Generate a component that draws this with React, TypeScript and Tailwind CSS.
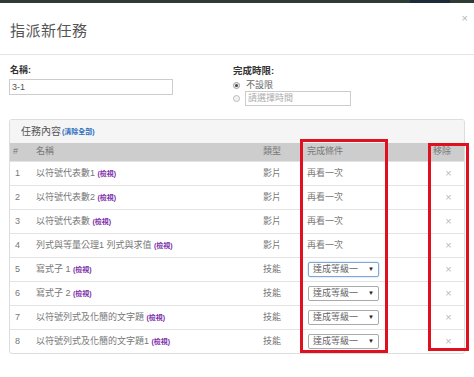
import React from "react";

const rows = [
  { name: "以符號代表數1", type: "影片", skill: false },
  { name: "以符號代表數2", type: "影片", skill: false },
  { name: "以符號代表數", type: "影片", skill: false },
  { name: "列式與等量公理1 列式與求值", type: "影片", skill: false },
  { name: "寫式子 1", type: "技能", skill: true },
  { name: "寫式子 2", type: "技能", skill: true },
  { name: "以符號列式及化簡的文字題", type: "技能", skill: true },
  { name: "以符號列式及化簡的文字題1", type: "技能", skill: true },
];

const cols = "grid grid-cols-[26px_227px_43px_123px_41px]";

const App = () => {
  return (
    <div
      className="relative w-[474px] h-[377px] overflow-hidden bg-white text-[#555]"
      style={{ fontFamily: '"Liberation Sans", "Noto Sans CJK TC", sans-serif' }}
    >
      <div className="h-[3px] bg-[#2e3a34] flex justify-end">
        <div className="w-[40px] h-full bg-[#1d2a3a] mr-[24px]" />
      </div>

      {/* modal header */}
      <div className="h-[52px] border-b border-[#e5e5e5] flex justify-between items-start pl-[10px] pr-[6px]">
        <h1 className="mt-[20px] text-[15px] leading-[16px] text-[#555] tracking-[0.5px]">指派新任務</h1>
        <button className="mt-[9px] text-[11px] leading-[12px] text-[#b5b5b5]">×</button>
      </div>

      {/* form */}
      <div className="h-[64px] grid grid-cols-[223px_1fr] px-[10px] pt-[10px]">
        <div>
          <div className="text-[9px] leading-[11px] font-bold text-[#333]">名稱:</div>
          <div className="mt-[3px] w-[164px] h-[16px] border border-[#ccc] -ml-px px-[2px] text-[9px] leading-[14px] text-[#555]">
            3-1
          </div>
        </div>
        <div>
          <div className="text-[9.5px] leading-[11px] font-bold text-[#333]">完成時限:</div>
          <div className="mt-[4px] flex items-center gap-[6px] h-[10px]">
            <span className="w-[7px] h-[7px] rounded-full border border-[#999] bg-[#eee] flex items-center justify-center">
              <span className="w-[3px] h-[3px] rounded-full bg-[#444]" />
            </span>
            <span className="text-[9px] leading-[10px] text-[#666]">不設限</span>
          </div>
          <div className="mt-px flex items-center gap-[5px]">
            <span className="w-[7px] h-[7px] rounded-full border border-[#bbb] bg-[#f2f2f2]" />
            <div className="w-[106px] h-[15px] border border-[#ccc] px-[2px] text-[9px] leading-[13px] text-[#aaa]">
              請選擇時間
            </div>
          </div>
        </div>
      </div>

      {/* panel */}
      <div className="mx-[9px] border border-[#ddd] rounded-[3px] overflow-hidden">
        <div className="h-[23px] bg-[#f5f5f5] flex items-center pl-[11px] gap-[1px]">
          <span className="text-[10px] leading-[11px] text-[#555]">任務內容</span>
          <span className="text-[7px] leading-[8px] font-bold text-[#2a6dbf] mt-[1px]">(清除全部)</span>
        </div>
        <div className={`${cols} h-[18px] items-center bg-[#cdcdcd] text-[9px] text-[#777]`}>
          <span className="pl-[3px]">#</span>
          <span>名稱</span>
          <span>類型</span>
          <span className="pl-[1px]">完成條件</span>
          <span className="pl-[4px]">移除</span>
        </div>
        {rows.map((r, i) => (
          <div
            key={i}
            className={`${cols} h-[24px] items-center border-t border-[#e3e3e3] text-[9px] text-[#777]`}
          >
            <span className="pl-[5px]">{i + 1}</span>
            <span className="whitespace-nowrap">
              {r.name} <span className="text-[7px] font-bold text-[#7a2aa8]">(檢視)</span>
            </span>
            <span>{r.type}</span>
            <span className="pl-[1px]">
              {r.skill ? (
                <div
                  className={`w-[71px] h-[15px] ml-px rounded-[2px] border bg-white flex items-center justify-between pl-[4px] pr-[4px] text-[9px] text-[#666] ${
                    i === 4 ? "border-[#7fa8d8] shadow-[0_0_2px_#9cc0ea]" : "border-[#aaa]"
                  }`}
                >
                  <span>達成等級一</span>
                  <span className="text-[6px] text-[#222]">▼</span>
                </div>
              ) : (
                "再看一次"
              )}
            </span>
            <span className="text-[11px] text-[#bbb] text-center pr-[2px]">×</span>
          </div>
        ))}
      </div>

      {/* annotation boxes */}
      <div className="absolute left-[300px] top-[139px] w-[88px] h-[214px] border-[3px] border-[#e0101e]" />
      <div className="absolute left-[428px] top-[143px] w-[41px] h-[208px] border-[3px] border-[#e0101e]" />
    </div>
  );
};

export default App;
